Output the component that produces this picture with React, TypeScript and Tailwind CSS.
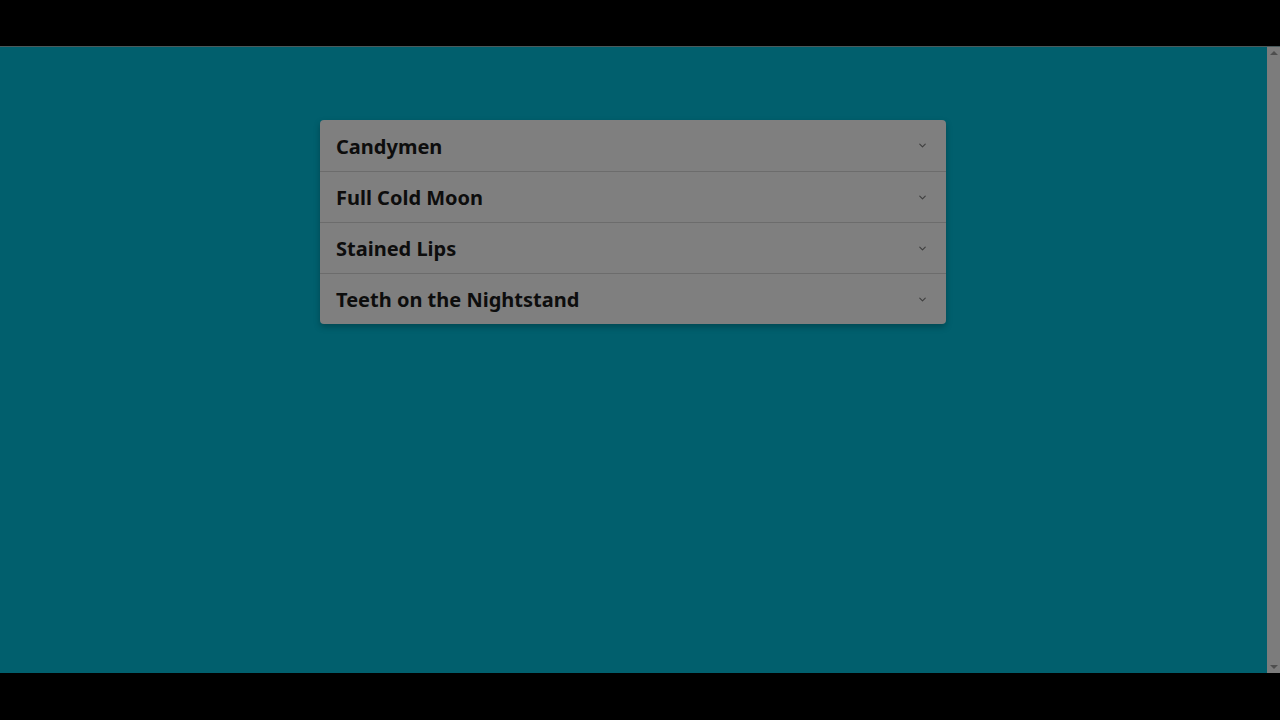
import { ChevronDown } from "lucide-react";

const songs = ["Candymen", "Full Cold Moon", "Stained Lips", "Teeth on the Nightstand"];

export default function App() {
  return (
    <div className="flex h-[720px] w-[1280px] flex-col overflow-hidden bg-black font-['Noto_Sans','Open_Sans',sans-serif]">
      <div className="h-[46px] shrink-0 bg-black" />
      <div className="flex h-[627px] shrink-0 border-t border-[#4a5a5c]">
        <main className="flex-1 bg-[#015f6d] pl-[320px] pt-[73px]">
          <div className="w-[626px] overflow-hidden rounded-[4px] bg-[#7f7f7f] shadow-[0_3px_6px_rgba(0,0,0,0.25)]">
            {songs.map((s, i) => (
              <button
                key={s}
                className={`flex h-[51px] w-full items-center justify-between pl-4 pr-[18px] pt-[2px] text-left ${
                  i > 0 ? "border-t border-[#6c6c6c]" : ""
                }`}
              >
                <span className="text-[20px] font-bold leading-none text-[#0d0d0d]">{s}</span>
                <ChevronDown className="mb-[2px] h-[11px] w-[11px] text-[#3f3f3f]" strokeWidth={2.5} />
              </button>
            ))}
          </div>
        </main>
        <div className="flex w-[13px] flex-col items-center justify-between bg-[#7c7c7c] py-[4px]">
          <span className="h-0 w-0 border-x-[4px] border-b-[4px] border-x-transparent border-b-[#4e4e4e]" />
          <span className="h-0 w-0 border-x-[4px] border-t-[4px] border-x-transparent border-t-[#4e4e4e]" />
        </div>
      </div>
      <div className="flex-1 bg-black" />
    </div>
  );
}
